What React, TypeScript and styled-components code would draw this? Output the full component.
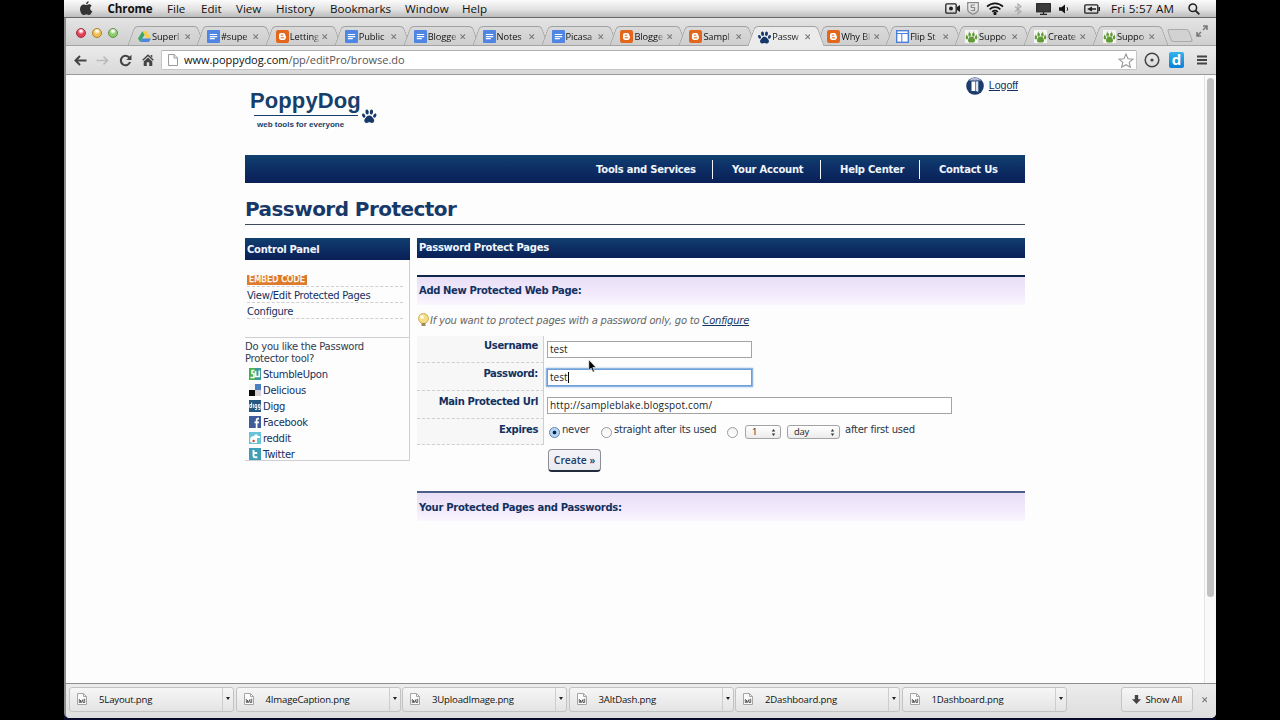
import React from "react";
import styled, { createGlobalStyle, css } from "styled-components";

const ui = `"Open Sans", "Noto Sans", sans-serif`;
const verdana = `"DejaVu Sans", sans-serif`;
const navy = "#12315f";
const barFill = "linear-gradient(#11406f, #0d2f66 45%, #0a2057)";

const Global = createGlobalStyle`
  * { box-sizing: border-box; }
  body { margin: 0; background: #000; overflow: hidden; }
  svg { display: block; flex: none; }
`;

const Screen = styled.div`
  width: 1280px; height: 720px; padding: 0 64px; overflow: hidden;
  display: flex; flex-direction: column; background: #000; font-family: ${ui}; color: #111;
`;

/* ---------- menu bar ---------- */
const MenuBar = styled.header`
  height: 18px; flex: none; display: flex; align-items: center;
  background: linear-gradient(#fbfbfb, #e2e2e2 55%, #bcbcbc); border-bottom: 1px solid #686868;
  padding-left: 15px;
`;
const Apple = styled.div`width: 28.5px; margin-top: -1px;`;
const MenuItem = styled.span<{ $w: number; $bold?: boolean; $ls?: number }>`
  width: ${p => p.$w}px; font-size: 11.6px; line-height: 17px; white-space: nowrap;
  font-weight: ${p => (p.$bold ? 700 : 500)}; letter-spacing: ${p => p.$ls ?? 0}px;
`;
const StatusArea = styled.div`
  margin-left: auto; width: 271px; display: flex; align-items: center;
`;
const StatusSlot = styled.div<{ $w: number }>`width: ${p => p.$w}px; display: flex;`;

/* ---------- browser chrome ---------- */
const Desktop = styled.div`
  width: 1152px; height: 702px; flex: none; background: #08092b;
`;
const Browser = styled.div`
  height: 700px; display: flex; flex-direction: column;
  background: #fff; border-left: 2px solid #8c8c8c; border-radius: 0 0 5px 5px; overflow: hidden;
`;
const TabStrip = styled.div`
  height: 28px; flex: none; display: flex; align-items: flex-end;
  background: linear-gradient(#e4e4e4, #cfcfcf); border-bottom: 1px solid #a4a4a4; padding-left: 10px;
`;
const Lights = styled.div`display: flex; gap: 6px; width: 54px; align-self: center; padding-top: 2px;`;
const Light = styled.i<{ $c: string; $d: string }>`
  width: 10px; height: 10px; border-radius: 50%; border: 1px solid ${p => p.$d};
  background: radial-gradient(circle at 50% 25%, #fff 8%, ${p => p.$c} 48%);
`;
const tabFace = css<{ $active?: boolean }>`
  content: ""; position: absolute; top: 0; bottom: 0; width: 60%; border: 0 solid #a2a2a2; border-top-width: 1px;
  background: ${p => (p.$active ? "#ebebeb" : "linear-gradient(#dadada, #cecece)")};
`;
const Tab = styled.div<{ $active?: boolean }>`
  position: relative; width: 68.93px; height: ${p => (p.$active ? 20 : 19)}px; flex: none;
  margin-bottom: ${p => (p.$active ? -1 : 0)}px; z-index: ${p => (p.$active ? 2 : 0)};
  display: flex; align-items: center; padding: 2px 0 0 8px;
  &::before { ${tabFace} left: 1px; border-left-width: 1px; border-top-left-radius: 4px; transform: skewX(-20deg); }
  &::after { ${tabFace} right: -2px; border-right-width: 1px; border-top-right-radius: 4px; transform: skewX(20deg); }
  & > * { position: relative; z-index: 1; }
`;
const TabTitle = styled.span`
  width: 29px; margin-left: 1px; white-space: nowrap; font-size: 9.3px; line-height: 14px; font-weight: 500; letter-spacing: -0.1px;
  mask-image: linear-gradient(90deg, #000 78%, rgba(0, 0, 0, 0.2));
`;
const TabClose = styled.span`margin-left: 3.5px;`;
const NewTab = styled.i`
  width: 22px; height: 13px; margin: 0 0 3px 5px; transform: skewX(20deg); border: 1px solid #aaa; border-radius: 3px; background: #d2d2d2;
`;
const FullScreen = styled.div`margin: 0 8px 8px auto;`;

const Toolbar = styled.div`
  height: 29px; flex: none; display: flex; align-items: center; padding: 0 8px 0 8px;
  background: linear-gradient(#ebebeb, #d9d9d9); border-bottom: 1px solid #9a9a9a;
`;
const ToolIcon = styled.div<{ $w: number }>`width: ${p => p.$w}px; display: flex;`;
const Omnibox = styled.div`
  width: 976px; height: 20px; display: flex; align-items: center; background: #fff;
  border: 1px solid #c5c5c5; border-top-color: #b0b0b0; border-radius: 2px; padding: 0 2px 0 6px;
`;
const Address = styled.span`
  flex: 1; margin-left: 6px; font-size: 11px; line-height: 16px; color: #555; letter-spacing: -0.04px;
  b { font-weight: 500; color: #111; }
`;
const Extensions = styled.div`display: flex; align-items: center; gap: 9px; margin-left: 7px;`;
const MenuLines = styled.div`padding-left: 4px;`;
const BlueBadge = styled.b`
  width: 15px; height: 16px; border-radius: 2px; background: linear-gradient(#31b6ee, #0d7fd3); color: #fff;
  font: 700 15px/14px "Open Sans", sans-serif; text-align: center;
`;

/* ---------- page ---------- */
const Viewport = styled.main`
  height: 608px; flex: none; display: flex; justify-content: space-between; background: #fdfdfd;
`;
const Page = styled.div`width: 780px; margin-left: 179px; font-family: ${verdana}; color: ${navy};`;
const ScrollTrack = styled.div`
  width: 12px; border-left: 1px solid #e4e4e4; background: #f9f9f9; padding: 3px 2px 0;
`;
const ScrollThumb = styled.div`height: 519px; border-radius: 4px; background: #c1c1c1;`;

const SiteHeader = styled.div`height: 80px; display: flex; justify-content: space-between; padding: 0 7px 0 5px;`;
const Brand = styled.div`display: flex; padding-top: 13px; font-family: "Liberation Sans", sans-serif; color: #173f6b;`;
const BrandText = styled.div`width: 112px;`;
const BrandName = styled.div`font-weight: 700; font-size: 22px; line-height: 26px; height: 27px; letter-spacing: 0.1px;`;
const BrandTag = styled.div`
  width: 104px; margin-left: 4px; padding-left: 3px; border-top: 1px solid #173f6b; font-size: 8px; line-height: 10px; padding-top: 4px;
  font-weight: 700; white-space: nowrap;
`;
const BrandPaw = styled.div`padding-top: 21px;`;
const Logoff = styled.div`
  display: flex; gap: 5px; height: 21px; align-items: center;
  font: 10.6px "Liberation Sans", sans-serif;
`;
const LogoffText = styled.a`text-decoration: underline; padding-bottom: 2px;`;
const NavBar = styled.nav`
  height: 28px; display: flex; justify-content: flex-end; align-items: center; background: ${barFill};
`;
const NavItem = styled.a<{ $w: number; $last?: boolean }>`
  width: ${p => p.$w}px; height: 19px; padding-left: 19px; border-right: ${p => (p.$last ? 0 : 1)}px solid #f2f6fa;
  color: #f1f6fc; font-size: 10px; line-height: 19px; font-weight: 700; white-space: nowrap; letter-spacing: -0.24px;
`;
const Title = styled.h1`
  margin: 0; height: 42px; padding-top: 11px; border-bottom: 1px solid #3c4a5c;
  font-size: 20px; line-height: 30px; font-weight: 700; color: #17396a; letter-spacing: -0.55px;
`;
const Columns = styled.div`display: flex; gap: 7px; padding-top: 13px; align-items: flex-start;`;
const Sidebar = styled.aside`width: 165px;`;
const BlockHead = styled.div<{ $h: number; $lh: number }>`
  height: ${p => p.$h}px; padding-left: 2px; background: ${barFill}; color: #f1f6fc;
  font-size: 10px; font-weight: 700; line-height: ${p => p.$lh}px; letter-spacing: -0.28px;
`;
const SideBody = styled.div`border: 1px solid #cfcfd4; border-width: 0 1px 1px 0;`;
const SideLinks = styled.div`height: 78px; padding: 11px 6px 0 2px; border-bottom: 1px solid #cfcfd4;`;
const SideLink = styled.div`
  height: 16px; border-bottom: 1px dashed #cfcfd2; font-size: 10px; line-height: 17px; white-space: nowrap; letter-spacing: -0.27px;
`;
const Embed = styled.span`
  display: block; width: 60px; height: 10px; margin-top: 4px; background: #dd7a2c; color: #fff;
  font-size: 8px; line-height: 10px; font-weight: 400; text-align: center; letter-spacing: 0.15px; -webkit-text-stroke: 0.3px #fff;
`;
const EmbedRow = styled(SideLink)`display: flex;`;
const Question = styled.div`padding-top: 3px; height: 28px; font-size: 10px; line-height: 12px; color: #333c4c; letter-spacing: -0.26px;`;
const Share = styled.div`
  height: 16px; display: flex; align-items: center; gap: 2px; padding-left: 4px; font-size: 10px; letter-spacing: -0.27px;
`;
const ShareList = styled.div`height: 94px;`;

const Content = styled.section`width: 608px;`;
const Section = styled.div<{ $c: string; $ls: number; $lh: number }>`
  height: 30px; border-top: 2px solid ${p => p.$c}; padding-left: 2px; background: linear-gradient(#e9e0f6, #f1e8fb 55%, #faf6fe);
  font-size: 10px; font-weight: 700; line-height: ${p => p.$lh}px; letter-spacing: ${p => p.$ls}px;
`;
const Spacer = styled.div<{ $h: number }>`height: ${p => p.$h}px;`;
const Tip = styled.div`
  height: 31px; padding-bottom: 1px; display: flex; align-items: center; font-size: 10px; font-style: italic; color: #666; letter-spacing: -0.22px; white-space: pre;
  u { color: #17355f; }
`;
const Row = styled.div<{ $h: number; $shift: number }>`
  height: ${p => p.$h}px; display: flex;
  --shift: ${p => p.$shift}px;
`;
const Label = styled.label`
  width: 127px; background: #f7f7f8; border-right: 1px solid #cfcfd2; border-bottom: 1px dashed #cfcfcf;
  padding: calc(3px + var(--shift)) 5px 0 0; text-align: right; font-size: 10px; line-height: 14px; font-weight: 700; letter-spacing: -0.37px;
`;
const Field = styled.div<{ $w: number; $focus?: boolean }>`
  width: ${p => p.$w}px; height: 17px; margin: calc(5px + var(--shift)) 0 0 3px; padding: 0 0 1px 2px; background: #fff; display: flex; align-items: center;
  border: 1px solid ${p => (p.$focus ? "#6d9fd6" : "#a4a4a4")};
  box-shadow: ${p => (p.$focus ? "0 0 0 1px #8db5e2, 0 0 2px 1px #a9c8ea" : "none")};
  font-family: ${ui}; font-size: 10px; line-height: 14px; color: #222; white-space: nowrap;
`;
const Url = styled.span`letter-spacing: 0.14px;`;
const Caret = styled.i`width: 1px; height: 11px; background: #000;`;
const Choices = styled.div`display: flex; padding-left: 5px; font-size: 10px; line-height: 14px; color: #2b3646; letter-spacing: -0.24px; white-space: nowrap;`;
const Choice = styled.div<{ $w: number }>`width: ${p => p.$w}px; display: flex; gap: 2px; padding-top: 4px;`;
const Radio = styled.i<{ $on?: boolean }>`
  width: 11px; height: 11px; margin-top: 3.5px; flex: none; border-radius: 50%; border: 1px solid ${p => (p.$on ? "#5c7fb0" : "#9a9a9a")};
  background: ${p => (p.$on ? "radial-gradient(circle, #123 22%, #a9cdf2 34%, #d3e8fb)" : "linear-gradient(#f2f2f2, #fff)")};
`;
const Select = styled.div<{ $w: number }>`
  width: ${p => p.$w}px; height: 14px; margin: 6px 6px 0 0; padding: 0 4px 0 6px; display: flex; align-items: center; justify-content: space-between;
  border: 1px solid #a3a3a3; border-radius: 3px; background: linear-gradient(#fff, #ececec); font-family: ${ui}; font-size: 9.4px; line-height: 12px; color: #222;
`;
const After = styled.span`padding-top: 4px; margin-left: -1px;`;
const Create = styled.div`
  width: 53px; height: 23px; margin: 4px 0 0 131px; border: 1px solid #8d8f96; border-bottom: 2px solid #222c3c; border-radius: 4px;
  background: linear-gradient(#f4f4f8, #e9eaf0); text-align: center; font-family: ${ui}; font-weight: 600; font-size: 10.3px; line-height: 20px; color: #203c66;
`;

/* ---------- downloads ---------- */
const Downloads = styled.footer`
  height: 35px; flex: none; display: flex; padding: 3px 9px 0 3px; border-top: 1px solid #8e8e8e; background: linear-gradient(#ececec, #dedede);
`;
const ShelfButton = styled.div<{ $w: number; $gap: number }>`
  width: ${p => p.$w}px; height: 25px; margin-right: ${p => p.$gap}px; flex: none; display: flex; align-items: center;
  border: 1px solid #c3c3c3; border-radius: 3px; background: linear-gradient(#f6f6f6, #e4e4e4); font-size: 9.6px; font-weight: 500;
`;
const FileIcon = styled.div`padding: 0 0 1px 7px; width: 29px;`;
const FileName = styled.span`flex: 1; letter-spacing: -0.18px;`;
const Drop = styled.div`
  width: 11px; height: 23px; border-left: 1px solid #cdcdcd; display: flex; align-items: center; justify-content: center; padding-bottom: 2px;
  &::after { content: ""; border: 2px solid transparent; border-top: 3px solid #222; border-bottom: 0; }
`;
const ShowAll = styled(ShelfButton)`padding-left: 10px; gap: 5px; margin-left: auto; letter-spacing: -0.15px;`;
const ShelfClose = styled.div`align-self: flex-start; padding-top: 10px;`;

const Pointer = styled.div`position: absolute; left: 588px; top: 359px;`;

/* ---------- icons ---------- */
const Cross = ({ s = 5.5 }: { s?: number }) => (
  <svg width={s} height={s} viewBox="0 0 6 6"><path d="M.5.5l5 5M5.5.5l-5 5" stroke="#777" strokeWidth="1.1" /></svg>
);
const Paw = ({ s, c }: { s: number; c: string }) => (
  <svg width={s} height={s} viewBox="0 0 16 16" fill={c}>
    <ellipse cx="5.6" cy="3.3" rx="1.8" ry="2.8" transform="rotate(-8 5.6 3.3)" />
    <ellipse cx="10.4" cy="3.3" rx="1.8" ry="2.8" transform="rotate(8 10.4 3.3)" />
    <ellipse cx="1.9" cy="7.2" rx="1.6" ry="2.4" transform="rotate(-25 1.9 7.2)" />
    <ellipse cx="14.1" cy="7.2" rx="1.6" ry="2.4" transform="rotate(25 14.1 7.2)" />
    <path d="M8 7.200c2.500 0 3.300 1.900 4.600 3.300 1.700 1.800.8 5.100-1.800 4.900C9.500 15.300 9 14.700 8 14.700s-1.500.6-2.800.7c-2.600.2-3.500-3.100-1.800-4.900C4.700 9.100 5.500 7.200 8 7.200z" />
  </svg>
);
const GreenPaw = () => (
  <svg width="13" height="13" viewBox="0 0 13 13">
    <path d="M0 0h13v13H0z" fill="#f4f4f0" />
    <g fill="#5f9a35">
      <path d="M3 10.500C3 8 4.800 6.600 6.500 6.600S10 8 10 10.500c0 2-1.700 2.200-3.500 1.900-1.800.3-3.500.1-3.500-1.900z" />
      <ellipse cx="1.900" cy="7.500" rx="1.200" ry="1.900" /><ellipse cx="11.100" cy="7.500" rx="1.200" ry="1.900" />
      <ellipse cx="4.600" cy="4.700" rx="1.300" ry="2" /><ellipse cx="8.400" cy="4.700" rx="1.300" ry="2" />
      <path d="M4.200 1l.5 2h-1zM8.800 1l.5 2h-1zM1.200 4l.6 2H.9zM11.800 4l.3 2h-.9z" />
    </g>
  </svg>
);
const Favicon = ({ kind }: { kind: string }) => {
  if (kind === "paw") return <Paw s={13} c="#14386b" />;
  if (kind === "green") return <GreenPaw />;
  if (kind === "drive")
    return (
      <svg width="13" height="13" viewBox="0 0 13 13">
        <path d="M4.400 1.200L8.600 1.200 13 8.500H8.800z" fill="#f6cf47" />
        <path d="M4.400 1.200L6.500 4.800 2.200 12 0 8.500z" fill="#3aa566" />
        <path d="M4.400 8.500H13L10.900 12H2.200z" fill="#4a86e0" />
      </svg>
    );
  if (kind === "blogger")
    return (
      <svg width="13" height="13" viewBox="0 0 13 13">
        <rect width="13" height="13" rx="2" fill="#e3661d" />
        <path d="M5 3h2.200c1.300 0 2 .9 2 2.100v.4c.5.100.7.300.7.800v1.100c0 1.500-.9 2.500-2.300 2.500H5.200c-1.300 0-2.200-.9-2.200-2.200V5c0-1.200.8-2 2-2z" fill="#fff" />
        <path d="M5.200 5.200h1.700M5.200 7.800h2.500" stroke="#e3661d" strokeWidth="1" strokeLinecap="round" />
      </svg>
    );
  if (kind === "site")
    return (
      <svg width="13" height="13" viewBox="0 0 13 13">
        <rect x=".7" y=".7" width="11.600" height="11.600" fill="#fff" stroke="#4a7fdb" strokeWidth="1.400" />
        <path d="M.7 3.500h11.600M5.800 3.500v9" stroke="#4a7fdb" strokeWidth="1" />
      </svg>
    );
  return (
    <svg width="13" height="13" viewBox="0 0 13 13">
      <rect width="13" height="13" rx="1" fill="#4f86e3" />
      <path d="M2.800 4.500h7.400M2.800 6.600h7.400M2.800 8.700h5" stroke="#fff" strokeWidth="1.200" />
    </svg>
  );
};
const PngFile = () => (
  <svg width="10" height="12" viewBox="0 0 10 12">
    <path d="M.5.5h6l3 3v8h-9z" fill="#fbfbfb" stroke="#a5a5a5" /><path d="M6.500.5v3h3" fill="none" stroke="#a5a5a5" />
    <path d="M2.300 6v3.500h1.200V7l1 2.500L6 6.500v3h1.700V5.700" fill="none" stroke="#555" strokeWidth=".9" />
  </svg>
);
const Arrows = () => (
  <svg width="5" height="7" viewBox="0 0 5 7" fill="#333"><path d="M2.500 0l1.700 2.600H.8zM2.500 7L.8 4.400h3.400z" /></svg>
);
const ShareIcon = ({ kind }: { kind: number }) => (
  <svg width="12" height="12" viewBox="0 0 12 12">
    {kind === 0 && (<><path d="M0 0h6v12H0z" fill="#49b04e" /><path d="M6 0h6v12H6z" fill="#3d9a9a" /><path d="M5.500 2.500H3v3h2v4H1.500M6.700 3v5.500h3.500V2.500" fill="none" stroke="#fff" strokeWidth="1.500" /></>)}
    {kind === 1 && (<><path d="M0 0h6v6H0z" fill="#f4f4f4" /><path d="M6 0h6v6H6z" fill="#4a7fc4" /><path d="M0 6h6v6H0z" fill="#090909" /><path d="M6 6h6v6H6z" fill="#d4d4d8" /></>)}
    {kind === 2 && (<><path d="M0 0h12v12H0z" fill="#26587f" /><path d="M2.600 2.500v5H.8v-3h1.800M4.300 4v4M7.700 8V4.500H6v3h1.700v2H6M11 8V4.500H9.400v3H11v2H9.400" fill="none" stroke="#fff" strokeWidth=".9" /></>)}
    {kind === 3 && (<><path d="M0 0h12v12H0z" fill="#3f5c9a" /><path d="M10 2.700H9c-1 0-1.400.5-1.400 1.500V12M5.500 6.300H10" fill="none" stroke="#fff" strokeWidth="1.700" /></>)}
    {kind === 4 && (<><path d="M0 0h12v12H0z" fill="#67c3d6" /><path d="M1 7.500C1 5 3 4 5.500 4V2.500h3V4H11v2H8v5H4C2 11 1 9.500 1 7.500z" fill="#fff" /><circle cx="4.600" cy="9" r="1.200" fill="#d04a34" /></>)}
    {kind === 5 && (<><path d="M0 0h12v12H0z" fill="#3f9fb6" /><path d="M4.500 2v5.500c0 1.200.6 1.800 1.800 1.800h2M4.500 5h3.700" fill="none" stroke="#fff" strokeWidth="1.900" /></>)}
  </svg>
);

const menus: [string, number][] = [
  ["File", 34], ["Edit", 35], ["View", 40], ["History", 54], ["Bookmarks", 75], ["Window", 57], ["Help", 30],
];
const tabs: [string, string][] = [
  ["drive", "Superl"], ["doc", "#supe"], ["blogger", "Letting"], ["doc", "Public"], ["doc", "Blogge"],
  ["doc", "Notes"], ["doc", "Picasa"], ["blogger", "Blogge"], ["blogger", "Sampl"], ["paw", "Passw"],
  ["blogger", "Why Bl"], ["site", "Flip St"], ["green", "Suppo"], ["green", "Create"], ["green", "Suppo"],
];
const shares = ["StumbleUpon", "Delicious", "Digg", "Facebook", "reddit", "Twitter"];
const files = ["5Layout.png", "4ImageCaption.png", "3UploadImage.png", "3AltDash.png", "2Dashboard.png", "1Dashboard.png"];

export default function App() {
  return (
    <Screen>
      <Global />
      <MenuBar>
        <Apple>
          <svg width="14" height="15" viewBox="0 0 14 15" fill="#333">
            <path d="M9.700.2c.1 1.500-1.200 3-2.700 3C6.800 1.700 8.200.4 9.700.2zM7.200 4.100c.7 0 1.500-.8 2.800-.8 1.100 0 2.200.6 2.800 1.500-2.300 1.400-2 4.600.5 5.500-.6 1.700-1.900 3.800-3.200 3.800-1 0-1.400-.6-2.700-.6s-1.700.6-2.700.6C2.900 14.100 1 10.900 1 8c0-2.900 1.800-4.600 3.700-4.600 1.100 0 1.900.7 2.500.7z" />
          </svg>
        </Apple>
        <MenuItem $w={59.5} $bold $ls={-0.1}>Chrome</MenuItem>
        {menus.map(([t, w]) => <MenuItem key={t} $w={w}>{t}</MenuItem>)}
        <StatusArea>
          <StatusSlot $w={22}>
            <svg width="16" height="11" viewBox="0 0 16 11"><rect x=".8" y=".8" width="10.400" height="9.400" rx="1" fill="none" stroke="#222" strokeWidth="1.300" /><circle cx="6" cy="5.500" r="2" fill="#222" /><path d="M12 4l3-2v7l-3-2z" fill="#222" /></svg>
          </StatusSlot>
          <StatusSlot $w={19}>
            <svg width="12" height="13" viewBox="0 0 12 13" fill="none" stroke="#888"><path d="M.7.700h10.600v6.800c0 2-2.600 3.800-5.300 4.800C3.300 11.300.7 9.500.7 7.500z" strokeWidth="1.200" /><path d="M8 3H4.300v2.500H7.500V8.500H4" strokeWidth="1.200" /></svg>
          </StatusSlot>
          <StatusSlot $w={28}>
            <svg width="18" height="13" viewBox="0 0 18 13" fill="none" stroke="#151515" strokeWidth="1.700"><path d="M1 4.600c4.500-4.400 11.500-4.400 16 0M3.600 7.300c3.100-3 7.700-3 10.800 0M6.200 9.800c1.700-1.500 3.900-1.500 5.600 0" /><circle cx="9" cy="11.500" r=".8" fill="#151515" /></svg>
          </StatusSlot>
          <StatusSlot $w={22}>
            <svg width="8" height="12" viewBox="0 0 8 12" fill="none" stroke="#aaa"><path d="M1 3.500l6 5-3 2.500V1l3 2.500-6 5" strokeWidth="1.100" /></svg>
          </StatusSlot>
          <StatusSlot $w={23}>
            <svg width="15" height="12" viewBox="0 0 15 12"><rect x=".6" y=".6" width="13.800" height="8.300" fill="#3a3a3a" stroke="#222" /><path d="M4 11.400h7M7.500 9v2" stroke="#222" strokeWidth="1.200" /></svg>
          </StatusSlot>
          <StatusSlot $w={25}>
            <svg width="11" height="10" viewBox="0 0 11 10"><path d="M0 3.200h2.500L6 .5v9L2.500 6.800H0z" fill="#151515" /><path d="M8 3.200c.8 1 .8 2.600 0 3.600" fill="none" stroke="#222" /></svg>
          </StatusSlot>
          <StatusSlot $w={27}>
            <svg width="17" height="10" viewBox="0 0 17 10"><rect x=".8" y=".8" width="13" height="8.400" rx="1" fill="none" stroke="#222" strokeWidth="1.300" /><path d="M14.500 3H16v4h-1.500zM3 5l5-2.500V4.300h4v1.400H8v1.800z" fill="#222" /></svg>
          </StatusSlot>
          <MenuItem $w={77} $ls={0.26}>Fri 5:57 AM</MenuItem>
          <svg width="12" height="12" viewBox="0 0 12 12" fill="none" stroke="#222"><circle cx="4.800" cy="4.800" r="3.800" strokeWidth="1.500" /><path d="M7.600 7.600l3.700 3.700" strokeWidth="1.900" /></svg>
        </StatusArea>
      </MenuBar>

      <Desktop>
        <Browser>
          <TabStrip>
            <Lights><Light $c="#e24054" $d="#a02c3c" /><Light $c="#f0c04e" $d="#a9812d" /><Light $c="#8ccb6c" $d="#5f9148" /></Lights>
            {tabs.map(([k, t], i) => (
              <Tab key={i} $active={k === "paw"}>
                <Favicon kind={k} /><TabTitle>{t}</TabTitle><TabClose><Cross /></TabClose>
              </Tab>
            ))}
            <NewTab />
            <FullScreen>
              <svg width="12" height="12" viewBox="0 0 12 12" fill="none" stroke="#777" strokeWidth="1.500"><path d="M7 5l4-4M7 1h4v4M5 7l-4 4M1 7v4h4" /></svg>
            </FullScreen>
          </TabStrip>
          <Toolbar>
            <ToolIcon $w={22}><svg width="13" height="11" viewBox="0 0 13 11" fill="none" stroke="#444" strokeWidth="2"><path d="M12.500 5.500H2M6 1L1.500 5.500 6 10" /></svg></ToolIcon>
            <ToolIcon $w={23}><svg width="13" height="11" viewBox="0 0 13 11" fill="none" stroke="#bbb" strokeWidth="1.700"><path d="M.5 5.500H11M7.500 1.500l4 4-4 4" /></svg></ToolIcon>
            <ToolIcon $w={23}><svg width="13" height="13" viewBox="0 0 13 13"><path d="M10.300 3.700A4.700 4.700 0 1 0 11 8" fill="none" stroke="#444" strokeWidth="2.100" /><path d="M12.500.7v5.200H7.300z" fill="#444" /></svg></ToolIcon>
            <ToolIcon $w={19}><svg width="12" height="12" viewBox="0 0 12 12" fill="#444"><path d="M6 .3l5.800 5.500-.9 1L6 2.300 1.100 6.800l-.9-1zM8.700 1h1.600v2.800L8.700 2.300zM6 3.400l4.300 4V12H7.200V8.300H4.800V12H1.700V7.400z" /></svg></ToolIcon>
            <Omnibox>
              <svg width="10" height="12" viewBox="0 0 10 12"><path d="M.5.5h5.700L9.500 4v7.500h-9z" fill="#fff" stroke="#9a9a9a" /><path d="M6 .5V4h3.500" fill="none" stroke="#9a9a9a" /></svg>
              <Address><b>www.poppydog.com</b>/pp/editPro/browse.do</Address>
              <svg width="16" height="15" viewBox="0 0 16 15"><path d="M8 1l2 4.700 5 .4-3.800 3.300 1.200 4.900L8 11.700l-4.400 2.600 1.200-4.900L1 6.100l5-.4z" fill="#fff" stroke="#999" strokeWidth="1.100" /></svg>
            </Omnibox>
            <Extensions>
              <svg width="16" height="16" viewBox="0 0 16 16"><circle cx="8" cy="8" r="6.800" fill="none" stroke="#444" strokeWidth="1.500" /><circle cx="8" cy="8" r="1.600" fill="#444" /></svg>
              <BlueBadge>d</BlueBadge>
              <MenuLines>
                <svg width="10" height="12" viewBox="0 0 10 12"><path d="M0 2.500h10M0 6h10M0 9.500h10" stroke="#444" strokeWidth="2" /></svg>
              </MenuLines>
            </Extensions>
          </Toolbar>

          <Viewport>
            <Page>
              <SiteHeader>
                <Brand>
                  <BrandText><BrandName>PoppyDog</BrandName><BrandTag>web tools for everyone</BrandTag></BrandText>
                  <BrandPaw><Paw s={14.5} c="#173a69" /></BrandPaw>
                </Brand>
                <Logoff>
                  <svg width="18" height="18" viewBox="0 0 18 18"><circle cx="9" cy="9" r="8.800" fill="#1c3d6c" /><path d="M3 3.500C6-.5 12-.5 15 3.500z" fill="#b7b9dc" /><path d="M5.500 4.500h7v9.500h-7z" fill="#fff" /><path d="M9.500 4.500l3-1v12l-3-1.500z" fill="#dce6f2" stroke="#1c3d6c" strokeWidth=".6" /></svg>
                  <LogoffText>Logoff</LogoffText>
                </Logoff>
              </SiteHeader>
              <NavBar>
                <NavItem $w={136}>Tools and Services</NavItem>
                <NavItem $w={108}>Your Account</NavItem>
                <NavItem $w={99}>Help Center</NavItem>
                <NavItem $w={105} $last>Contact Us</NavItem>
              </NavBar>
              <Title>Password Protector</Title>
              <Columns>
                <Sidebar>
                  <BlockHead $h={22} $lh={24}>Control Panel</BlockHead>
                  <SideBody>
                    <SideLinks>
                      <EmbedRow><Embed>EMBED CODE</Embed></EmbedRow>
                      <SideLink>View/Edit Protected Pages</SideLink>
                      <SideLink>Configure</SideLink>
                    </SideLinks>
                    <Question>Do you like the Password<br />Protector tool?</Question>
                    <ShareList>
                      {shares.map((s, i) => <Share key={s}><ShareIcon kind={i} />{s}</Share>)}
                    </ShareList>
                  </SideBody>
                </Sidebar>
                <Content>
                  <BlockHead $h={20} $lh={19}>Password Protect Pages</BlockHead>
                  <Spacer $h={17} />
                  <Section $c="#10264d" $ls={-0.36} $lh={28}>Add New Protected Web Page:</Section>
                  <Tip>
                    <svg width="13" height="14" viewBox="0 0 13 14"><circle cx="6.500" cy="5.500" r="5" fill="#f6dc86" stroke="#cdb05a" /><circle cx="5" cy="4" r="2" fill="#fffbe2" /><path d="M4.500 10h4v3h-4z" fill="#9a8a5c" /></svg>
                    If you want to protect pages with a password only, go to <u>Configure</u>
                  </Tip>
                  <Row $h={27} $shift={0}><Label>Username</Label><Field $w={205}>test</Field></Row>
                  <Row $h={28} $shift={1}><Label>Password:</Label><Field $w={205} $focus>test<Caret /></Field></Row>
                  <Row $h={28} $shift={1}><Label>Main Protected Url</Label><Field $w={405}><Url>http://sampleblake.blogspot.com/</Url></Field></Row>
                  <Row $h={26} $shift={1}>
                    <Label>Expires</Label>
                    <Choices>
                      <Choice $w={52}><Radio $on />never</Choice>
                      <Choice $w={126}><Radio />straight after its used</Choice>
                      <Choice $w={18}><Radio /></Choice>
                      <Select $w={36}>1<Arrows /></Select>
                      <Select $w={53}>day<Arrows /></Select>
                      <After>after first used</After>
                    </Choices>
                  </Row>
                  <Create>Create »</Create>
                  <Spacer $h={19} />
                  <Section $c="#4c5f8a" $ls={-0.3} $lh={30}>Your Protected Pages and Passwords:</Section>
                </Content>
              </Columns>
            </Page>
            <ScrollTrack><ScrollThumb /></ScrollTrack>
          </Viewport>

          <Downloads>
            {files.map(f => (
              <ShelfButton key={f} $w={165} $gap={1.5}>
                <FileIcon><PngFile /></FileIcon><FileName>{f}</FileName><Drop />
              </ShelfButton>
            ))}
            <ShowAll $w={72} $gap={9}>
              <svg width="9" height="9" viewBox="0 0 9 9" fill="#444"><path d="M2.800 0h3.400v4.300H9L4.500 9 0 4.300h2.800z" /></svg>
              Show All
            </ShowAll>
            <ShelfClose><Cross /></ShelfClose>
          </Downloads>
        </Browser>
      </Desktop>
      <Pointer>
        <svg width="9" height="14" viewBox="0 0 9 14"><path d="M.8.800v10.500l2.400-2.200 1.700 4 1.600-.7-1.700-3.900h3.300z" fill="#000" stroke="#fff" strokeWidth=".6" /></svg>
      </Pointer>
    </Screen>
  );
}
